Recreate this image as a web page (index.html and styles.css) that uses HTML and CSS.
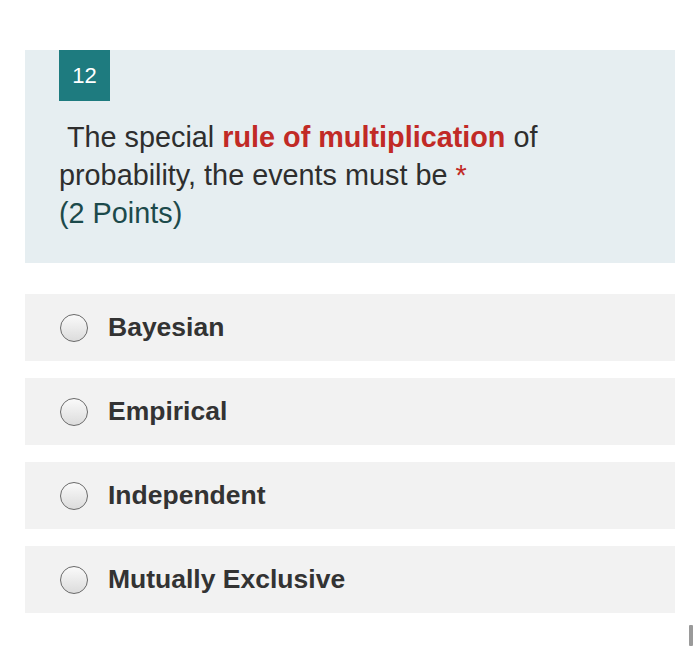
FILE: index.html
```html
<!DOCTYPE html>
<html>
<head>
<meta charset="utf-8">
<link rel="stylesheet" href="styles.css">
</head>
<body>
<div class="page">
  <div class="question">
    <div class="badge">12</div>
    <div class="qtext">&nbsp;The special <b class="hl">rule of multiplication</b> of probability, the events must be <span class="req">*</span><br><span class="pts">(2 Points)</span></div>
  </div>
  <div class="options">
    <label class="opt"><span class="radio"></span><span class="label">Bayesian</span></label>
    <label class="opt"><span class="radio"></span><span class="label">Empirical</span></label>
    <label class="opt"><span class="radio"></span><span class="label">Independent</span></label>
    <label class="opt"><span class="radio"></span><span class="label">Mutually Exclusive</span></label>
  </div>
</div>
<div class="scrollbar"></div>
</body>
</html>
```
FILE: styles.css
```css
html, body {
  margin: 0;
  padding: 0;
  background: #ffffff;
  font-family: "Liberation Sans", Arial, sans-serif;
}
.page {
  padding: 50px 25px 0 25px;
  width: 650px;
}
.question {
  background: #e6eef1;
  height: 213px;
  box-sizing: border-box;
  padding: 0 34px;
}
.badge {
  width: 51px;
  height: 51px;
  background: #1e7b7f;
  color: #ffffff;
  font-size: 22px;
  display: flex;
  align-items: center;
  justify-content: center;
}
.qtext {
  margin-top: 17px;
  font-size: 28.8px;
  line-height: 38px;
  color: #2e2e2e;
}
.hl {
  color: #c12a26;
}
.req {
  color: #c12a26;
}
.pts {
  color: #1c4a4b;
}
.options {
  display: flex;
  flex-direction: column;
  gap: 17px;
  margin-top: 31px;
}
.opt {
  display: flex;
  align-items: center;
  height: 67px;
  background: #f2f2f2;
  padding-left: 35px;
}
.radio {
  width: 26px;
  height: 26px;
  border: 1.5px solid #6a6a6a;
  border-radius: 50%;
  background: linear-gradient(#fafafa, #dcdcdc);
  flex: none;
}
.label {
  margin-left: 20px;
  font-size: 26.5px;
  font-weight: bold;
  color: #333333;
}
.scrollbar {
  position: fixed;
  left: 689px;
  top: 625px;
  width: 4px;
  height: 21px;
  background: #9a9a9a;
  border-radius: 1px;
}
```
